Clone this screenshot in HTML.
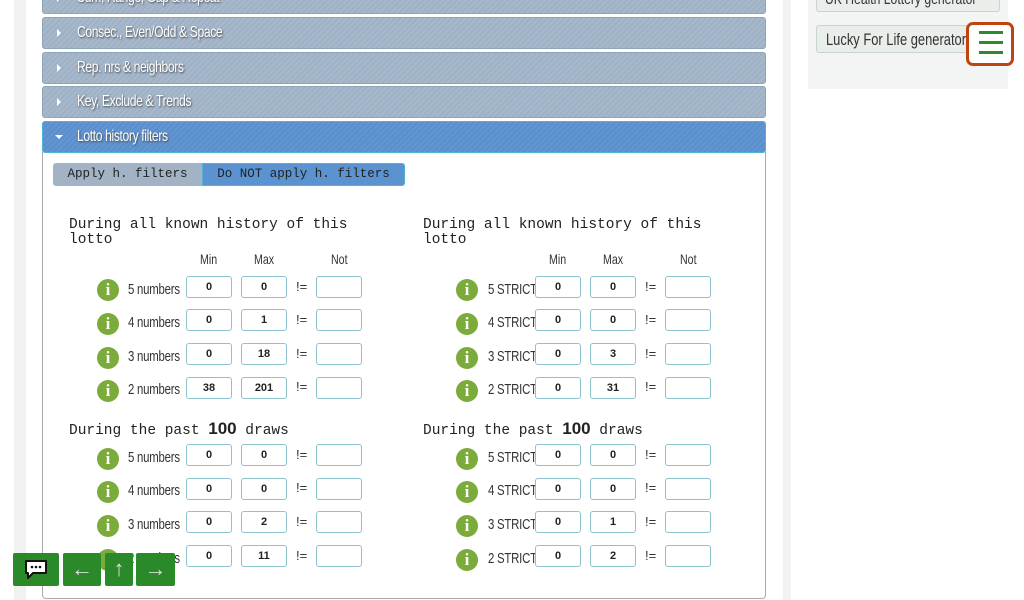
<!DOCTYPE html>
<html><head><meta charset="utf-8"><style>
*{box-sizing:border-box;margin:0;padding:0}
body{width:1024px;height:600px;overflow:hidden;background:#fff;font-family:"Liberation Sans",sans-serif;position:relative}
.a{position:absolute}
.n{display:inline-block;transform:scaleX(0.76);transform-origin:0 50%;white-space:nowrap}
.hd{position:absolute;left:42px;width:724px;height:32px;border-radius:3px;border:1px solid #8ea4bb;
background:repeating-linear-gradient(135deg,#9fb1c6 0 2px,#a7b8cb 2px 4px);color:#fff;
font-size:16px;line-height:30px;padding-left:34px;text-shadow:1px 1px 2px #444;letter-spacing:-0.5px;white-space:nowrap}
.hd:before{content:"";position:absolute;left:14px;top:11px;border-left:4px solid #fff;border-top:4px solid transparent;border-bottom:4px solid transparent}
.act{background:repeating-linear-gradient(135deg,#5a8fcc 0 2px,#6196d2 2px 4px);border-color:#4fb0d8}
.act:before{left:12px;top:13px;border-top:4px solid #fff;border-left:4px solid transparent;border-right:4px solid transparent;border-bottom:0}
.mono{font-family:"Liberation Mono",monospace;font-size:14.5px;color:#222;line-height:15px;white-space:nowrap}
.ic{position:absolute;width:22px;height:22px;border-radius:50%;background:#7bab3a;color:#fff;font:bold 17px/22px "Liberation Serif",serif;text-align:center}
.lb{position:absolute;font-size:15px;color:#333;letter-spacing:-0.3px}
.in{position:absolute;width:46px;height:22px;border:1px solid #8cc3cc;border-radius:3px;font-size:11px;font-weight:bold;color:#222;text-align:center;line-height:20px;background:#fff}
.ne{position:absolute;font-size:13px;color:#333}
.ch{position:absolute;font-size:14px;color:#333;top:251px}
</style></head><body>
<div class="a" style="left:14px;top:0;width:12px;height:600px;background:#f1f3f2"></div>
<div class="a" style="left:783px;top:0;width:8px;height:600px;background:#f1f3f2"></div>
<div class="a" style="left:808px;top:0;width:200px;height:89px;background:#f3f5f4"></div>
<div class="a" style="left:816px;top:-10px;width:184px;height:22px;border:1px solid #c9d3cf;border-radius:3px;background:#e9eeeb;font-size:16px;color:#333;padding:0 8px;line-height:18px;overflow:hidden"><span class="n">UK Health Lottery generator</span></div>
<div class="a" style="left:816px;top:25px;width:184px;height:28px;border:1px solid #c9d3cf;border-radius:3px;background:#e9eeeb;font-size:17px;color:#333;padding-left:9px;line-height:27px;overflow:hidden"><span class="n">Lucky For Life generator</span></div>
<div class="a" style="left:966px;top:22px;width:48px;height:44px;border:3px solid #c0440f;border-radius:7px;background:#fff">
<div class="a" style="left:10px;top:6px;width:24px;height:3px;background:#2e8a2e"></div>
<div class="a" style="left:10px;top:16px;width:24px;height:3px;background:#2e8a2e"></div>
<div class="a" style="left:10px;top:26px;width:24px;height:3px;background:#2e8a2e"></div></div>

<div class="hd" style="top:-18px"><span class="n">Sum, Range, Gap &amp; Repeat</span></div>
<div class="hd" style="top:17px"><span class="n">Consec., Even/Odd &amp; Space</span></div>
<div class="hd" style="top:52px"><span class="n">Rep. nrs &amp; neighbors</span></div>
<div class="hd" style="top:86px"><span class="n">Key, Exclude &amp; Trends</span></div>
<div class="hd act" style="top:121px"><span class="n">Lotto history filters</span></div>
<div class="a" style="left:42px;top:152px;width:724px;height:447px;border:1px solid #aaa;border-top:0;border-radius:0 0 4px 4px"></div>
<div class="a mono" style="left:53px;top:163px;width:149px;height:23px;background:#a3b3c6;border-radius:3px 0 0 3px;line-height:23px;text-align:center;font-size:12.5px">Apply h. filters</div>
<div class="a mono" style="left:202px;top:163px;width:203px;height:23px;background:#5b93d1;border:1px solid #4fb0d8;border-radius:0 3px 3px 0;line-height:21px;text-align:center;font-size:12.5px">Do NOT apply h. filters</div>

<div class="a mono" style="left:69px;top:218px">During all known history of this<br>lotto</div>
<div class="a mono" style="left:423px;top:218px">During all known history of this<br>lotto</div>
<div class="ch" style="left:200px"><span class="n">Min</span></div><div class="ch" style="left:254px"><span class="n">Max</span></div><div class="ch" style="left:331px"><span class="n">Not</span></div>
<div class="ch" style="left:549px"><span class="n">Min</span></div><div class="ch" style="left:603px"><span class="n">Max</span></div><div class="ch" style="left:680px"><span class="n">Not</span></div>
<div class="a mono" style="left:69px;top:421px">During the past <b style="font-family:'Liberation Sans',sans-serif;font-size:17px">100</b> draws</div>
<div class="a mono" style="left:423px;top:421px">During the past <b style="font-family:'Liberation Sans',sans-serif;font-size:17px">100</b> draws</div>

<!-- left rows -->
<div class="ic" style="left:97px;top:279px">i</div><div class="lb" style="left:128px;top:281px"><span class="n">5 numbers</span></div><div class="in" style="left:186px;top:276px">0</div><div class="in" style="left:241px;top:276px">0</div><div class="ne" style="left:296px;top:279px">!=</div><div class="in" style="left:316px;top:276px"></div>
<div class="ic" style="left:97px;top:313px">i</div><div class="lb" style="left:128px;top:314px"><span class="n">4 numbers</span></div><div class="in" style="left:186px;top:309px">0</div><div class="in" style="left:241px;top:309px">1</div><div class="ne" style="left:296px;top:312px">!=</div><div class="in" style="left:316px;top:309px"></div>
<div class="ic" style="left:97px;top:347px">i</div><div class="lb" style="left:128px;top:348px"><span class="n">3 numbers</span></div><div class="in" style="left:186px;top:343px">0</div><div class="in" style="left:241px;top:343px">18</div><div class="ne" style="left:296px;top:346px">!=</div><div class="in" style="left:316px;top:343px"></div>
<div class="ic" style="left:97px;top:380px">i</div><div class="lb" style="left:128px;top:381px"><span class="n">2 numbers</span></div><div class="in" style="left:186px;top:377px">38</div><div class="in" style="left:241px;top:377px">201</div><div class="ne" style="left:296px;top:379px">!=</div><div class="in" style="left:316px;top:377px"></div>

<div class="ic" style="left:97px;top:448px">i</div><div class="lb" style="left:128px;top:449px"><span class="n">5 numbers</span></div><div class="in" style="left:186px;top:444px">0</div><div class="in" style="left:241px;top:444px">0</div><div class="ne" style="left:296px;top:447px">!=</div><div class="in" style="left:316px;top:444px"></div>
<div class="ic" style="left:97px;top:481px">i</div><div class="lb" style="left:128px;top:482px"><span class="n">4 numbers</span></div><div class="in" style="left:186px;top:478px">0</div><div class="in" style="left:241px;top:478px">0</div><div class="ne" style="left:296px;top:480px">!=</div><div class="in" style="left:316px;top:478px"></div>
<div class="ic" style="left:97px;top:515px">i</div><div class="lb" style="left:128px;top:516px"><span class="n">3 numbers</span></div><div class="in" style="left:186px;top:511px">0</div><div class="in" style="left:241px;top:511px">2</div><div class="ne" style="left:296px;top:514px">!=</div><div class="in" style="left:316px;top:511px"></div>
<div class="ic" style="left:97px;top:549px">i</div><div class="lb" style="left:128px;top:550px"><span class="n">2 numbers</span></div><div class="in" style="left:186px;top:545px">0</div><div class="in" style="left:241px;top:545px">11</div><div class="ne" style="left:296px;top:548px">!=</div><div class="in" style="left:316px;top:545px"></div>

<!-- right rows -->
<div class="ic" style="left:456px;top:279px">i</div><div class="lb" style="left:488px;top:281px"><span class="n">5 STRICT</span></div><div class="in" style="left:535px;top:276px">0</div><div class="in" style="left:590px;top:276px">0</div><div class="ne" style="left:645px;top:279px">!=</div><div class="in" style="left:665px;top:276px"></div>
<div class="ic" style="left:456px;top:313px">i</div><div class="lb" style="left:488px;top:314px"><span class="n">4 STRICT</span></div><div class="in" style="left:535px;top:309px">0</div><div class="in" style="left:590px;top:309px">0</div><div class="ne" style="left:645px;top:312px">!=</div><div class="in" style="left:665px;top:309px"></div>
<div class="ic" style="left:456px;top:347px">i</div><div class="lb" style="left:488px;top:348px"><span class="n">3 STRICT</span></div><div class="in" style="left:535px;top:343px">0</div><div class="in" style="left:590px;top:343px">3</div><div class="ne" style="left:645px;top:346px">!=</div><div class="in" style="left:665px;top:343px"></div>
<div class="ic" style="left:456px;top:380px">i</div><div class="lb" style="left:488px;top:381px"><span class="n">2 STRICT</span></div><div class="in" style="left:535px;top:377px">0</div><div class="in" style="left:590px;top:377px">31</div><div class="ne" style="left:645px;top:379px">!=</div><div class="in" style="left:665px;top:377px"></div>

<div class="ic" style="left:456px;top:448px">i</div><div class="lb" style="left:488px;top:449px"><span class="n">5 STRICT</span></div><div class="in" style="left:535px;top:444px">0</div><div class="in" style="left:590px;top:444px">0</div><div class="ne" style="left:645px;top:447px">!=</div><div class="in" style="left:665px;top:444px"></div>
<div class="ic" style="left:456px;top:481px">i</div><div class="lb" style="left:488px;top:482px"><span class="n">4 STRICT</span></div><div class="in" style="left:535px;top:478px">0</div><div class="in" style="left:590px;top:478px">0</div><div class="ne" style="left:645px;top:480px">!=</div><div class="in" style="left:665px;top:478px"></div>
<div class="ic" style="left:456px;top:515px">i</div><div class="lb" style="left:488px;top:516px"><span class="n">3 STRICT</span></div><div class="in" style="left:535px;top:511px">0</div><div class="in" style="left:590px;top:511px">1</div><div class="ne" style="left:645px;top:514px">!=</div><div class="in" style="left:665px;top:511px"></div>
<div class="ic" style="left:456px;top:549px">i</div><div class="lb" style="left:488px;top:550px"><span class="n">2 STRICT</span></div><div class="in" style="left:535px;top:545px">0</div><div class="in" style="left:590px;top:545px">2</div><div class="ne" style="left:645px;top:548px">!=</div><div class="in" style="left:665px;top:545px"></div>

<!-- bottom nav buttons -->
<div class="a" style="left:13px;top:553px;width:46px;height:33px;background:#2a8a2a;border-radius:2px">
<svg class="a" style="left:11px;top:6px" width="24" height="21" viewBox="0 0 24 21"><path d="M2 2h20v12H9l-5 5v-5H2z" fill="#fff" stroke="#111" stroke-width="2" stroke-linejoin="round"/><circle cx="8" cy="8" r="1.3" fill="#111"/><circle cx="12" cy="8" r="1.3" fill="#111"/><circle cx="16" cy="8" r="1.3" fill="#111"/></svg></div>
<div class="a" style="left:63px;top:553px;width:38px;height:33px;background:#2a8a2a;border-radius:2px;color:#ddd;font-size:22px;text-align:center;line-height:31px">←</div>
<div class="a" style="left:105px;top:553px;width:28px;height:33px;background:#2a8a2a;border-radius:2px;color:#ddd;font-size:22px;text-align:center;line-height:31px">↑</div>
<div class="a" style="left:136px;top:553px;width:39px;height:33px;background:#2a8a2a;border-radius:2px;color:#ddd;font-size:22px;text-align:center;line-height:31px">→</div>
</body></html>
